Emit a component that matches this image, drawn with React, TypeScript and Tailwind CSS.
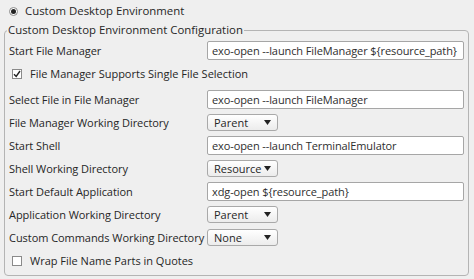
import { useState } from "react";

type Row =
  | { kind: "input"; label: string; value: string }
  | { kind: "select"; label: string; value: string }
  | { kind: "check"; label: string; checked: boolean };

const rows: Row[] = [
  { kind: "input", label: "Start File Manager", value: "exo-open --launch FileManager ${resource_path}" },
  { kind: "check", label: "File Manager Supports Single File Selection", checked: true },
  { kind: "input", label: "Select File in File Manager", value: "exo-open --launch FileManager" },
  { kind: "select", label: "File Manager Working Directory", value: "Parent" },
  { kind: "input", label: "Start Shell", value: "exo-open --launch TerminalEmulator" },
  { kind: "select", label: "Shell Working Directory", value: "Resource" },
  { kind: "input", label: "Start Default Application", value: "xdg-open ${resource_path}" },
  { kind: "select", label: "Application Working Directory", value: "Parent" },
  { kind: "select", label: "Custom Commands Working Directory", value: "None" },
  { kind: "check", label: "Wrap File Name Parts in Quotes", checked: false },
];

function CheckBox({ checked }: { checked: boolean }) {
  return (
    <span className="flex h-[10px] w-[10px] items-center justify-center border border-[#8a8a8a] bg-white">
      {checked && (
        <svg width="8" height="8" viewBox="0 0 8 8">
          <path d="M1 4.2 L3.2 6.5 L7 1" fill="none" stroke="#222" strokeWidth="1.4" />
        </svg>
      )}
    </span>
  );
}

function Dropdown({ value }: { value: string }) {
  return (
    <div className="flex h-[17px] w-[71px] items-center justify-between rounded-[3px] border border-[#a9a9a9] bg-gradient-to-b from-white to-[#ececec] pl-[6px] pr-[6px] text-[#262626]">
      <span>{value}</span>
      <svg width="7" height="5" viewBox="0 0 7 5">
        <path d="M0 0 H7 L3.5 5 Z" fill="#222" />
      </svg>
    </div>
  );
}

export default function App() {
  const [custom] = useState(true);

  return (
    <div className="h-[279px] w-[474px] overflow-hidden bg-[#efefef] font-['Open_Sans',sans-serif] text-[11px] leading-[16px] text-[#262626]">
      <div className="flex h-[22px] items-center pl-[9px] text-[11.4px]">
        <span className="flex h-[9px] w-[9px] items-center justify-center rounded-full border border-[#8a8a8a] bg-white">
          {custom && <span className="h-[5px] w-[5px] rounded-full bg-[#222]" />}
        </span>
        <span className="ml-[7px]">Custom Desktop Environment</span>
      </div>

      <fieldset className="ml-[4px] mr-[5px] rounded-[4px] border border-[#b4b4b4] pb-[3px] pl-[4px] pr-[4px]">
        <legend className="ml-[-2px] px-[1px] text-[11.4px]">Custom Desktop Environment Configuration</legend>
        <div className="mt-[1px] flex flex-col">
          {rows.map((row, i) => {
            if (row.kind === "check") {
              return (
                <div
                  key={row.label}
                  className={`flex items-center pl-[3px] ${i === 1 ? "h-[24px]" : "h-[23px]"}`}
                >
                  <CheckBox checked={row.checked} />
                  <span className="ml-[8px]">{row.label}</span>
                </div>
              );
            }
            return (
              <div
                key={row.label}
                className={`flex h-[23px] items-center ${i === 2 ? "mt-[2px]" : ""}`}
              >
                <span className="w-[198px] shrink-0 whitespace-nowrap tracking-[-0.05px]">{row.label}</span>
                {row.kind === "input" ? (
                  <div className="flex h-[19px] flex-1 items-center rounded-[2px] border border-[#a6a6a6] bg-white pl-[4px] tracking-[-0.1px] text-[#2e2e2e]">
                    {row.value}
                  </div>
                ) : (
                  <Dropdown value={row.value} />
                )}
              </div>
            );
          })}
        </div>
      </fieldset>
    </div>
  );
}
